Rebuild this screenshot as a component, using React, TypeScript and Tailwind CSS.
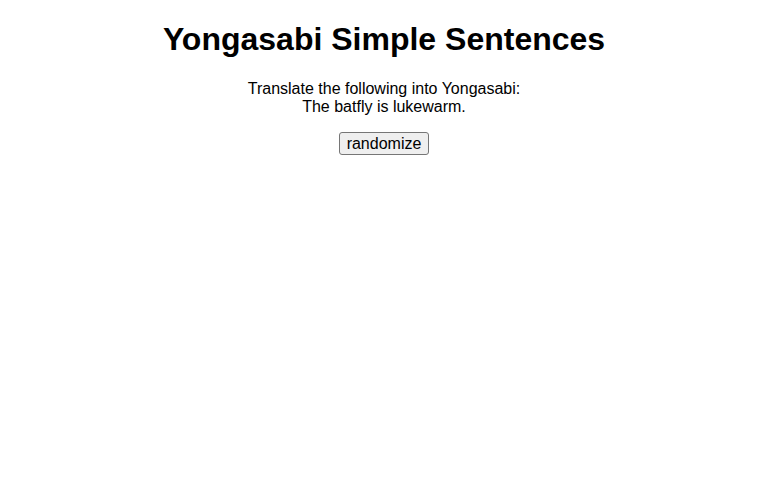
import React, { useState } from 'react';

const SENTENCES = [
  'The batfly is lukewarm.',
  'The dog is sleeping.',
  'The river is cold.',
  'The child is happy.',
];

const App: React.FC = () => {
  const [idx, setIdx] = useState(0);

  return (
    <div className="min-h-screen bg-white text-black text-center font-['Liberation_Sans',Arial,sans-serif]">
      <h1 className="pt-[21px] mb-[22px] text-[32px] leading-[37px] font-bold">
        Yongasabi Simple Sentences
      </h1>

      <p className="text-base leading-[18px] mb-4">
        Translate the following into Yongasabi:
        <br />
        {SENTENCES[idx]}
      </p>

      <div>
        <button
          onClick={() => setIdx((idx + 1) % SENTENCES.length)}
          className="px-[7px] pt-[2px] pb-[1px] text-base leading-[18px] bg-[#efefef] border border-[#767676] rounded-[3px] hover:bg-[#e5e5e5]"
        >
          randomize
        </button>
      </div>
    </div>
  );
};

export default App;
